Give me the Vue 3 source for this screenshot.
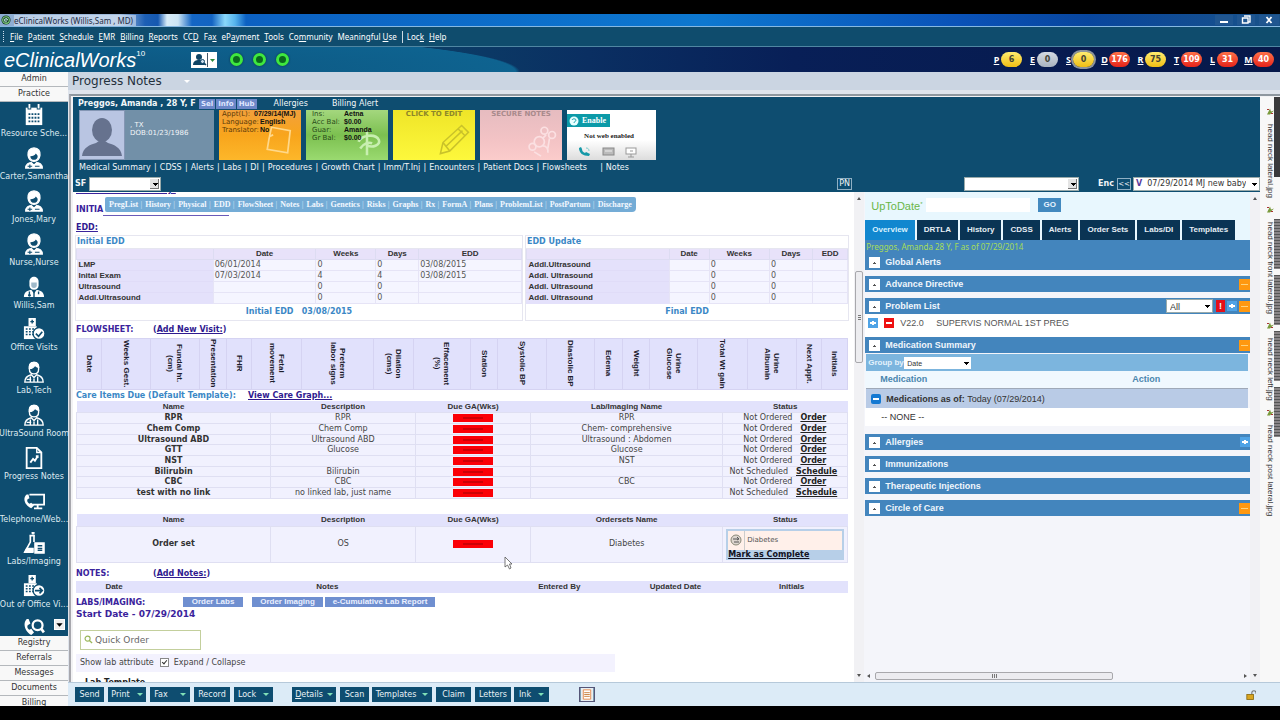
<script setup>
const menus = [
  ['', 'F', 'ile'], ['', 'P', 'atient'], ['', 'S', 'chedule'], ['', 'E', 'MR'], ['', 'B', 'illing'],
  ['', 'R', 'eports'], ['CC', 'D', ''], ['Fa', 'x', ''], ['eP', 'a', 'yment'], ['', 'T', 'ools'],
  ['Co', 'm', 'munity'], ['Meaningful ', 'U', 'se'], ['Loc', 'k', ''], ['', 'H', 'elp']
]
const counters = [
  { k: 'P', n: 6, c: 'yellow' }, { k: 'E', n: 0, c: 'grey' }, { k: 'S', n: 0, c: 'yellow ring' },
  { k: 'D', n: 176, c: 'red' }, { k: 'R', n: 75, c: 'yellow' }, { k: 'T', n: 109, c: 'red' },
  { k: 'L', n: 31, c: 'red' }, { k: 'M', n: 40, c: 'red' }
]
const nav = [
  ['calendar', 'Resource Sche...'], ['nurse', 'Carter,Samantha'], ['nurse', 'Jones,Mary'],
  ['nurse', 'Nurse,Nurse'], ['doctor', 'Willis,Sam'], ['office', 'Office Visits'], ['tech', 'Lab,Tech'],
  ['tech', 'UltraSound Room'], ['note', 'Progress Notes'], ['phone', 'Telephone/Web...'],
  ['lab', 'Labs/Imaging'], ['out', 'Out of Office Vi...']
]
const bands = ['Registry', 'Referrals', 'Messages', 'Documents', 'Billing']
const patientLinks = ['Medical Summary', 'CDSS', 'Alerts', 'Labs', 'DI', 'Procedures', 'Growth Chart', 'Imm/T.Inj', 'Encounters', 'Patient Docs', 'Flowsheets', 'Notes']
const jumps = ['PregList', 'History', 'Physical', 'EDD', 'FlowSheet', 'Notes', 'Labs', 'Genetics', 'Risks', 'Graphs', 'Rx', 'FormA', 'Plans', 'ProblemList', 'PostPartum', 'Discharge']
const initialEdd = [
  ['LMP', '06/01/2014', '0', '0', '03/08/2015'], ['Inital Exam', '07/03/2014', '4', '4', '03/08/2015'],
  ['Ultrasound', '', '0', '0', ''], ['Addl.Ultrasound', '', '0', '0', '']
]
const eddUpdate = [
  ['Addl.Ultrasound', '', '0', '0', ''], ['Addl. Ultrasound', '', '0', '0', ''],
  ['Addl. Ultrasound', '', '0', '0', ''], ['Addl. Ultrasound', '', '0', '0', '']
]
const flow = [
  ['Date', 25], ['Weeks Gest.', 49], ['Fundal ht.\n(cm)', 49], ['Presentation', 27], ['FHR', 25],
  ['Fetal\nmovement', 50], ['Preterm\nlabor signs', 72], ['Dilation\n(cms)', 40], ['Effacement\n(%)', 57],
  ['Station', 27], ['Systolic BP', 49], ['Diastolic BP', 48], ['Edema', 28], ['Weight', 27],
  ['Urine\nGlucose', 48], ['Total Wt gain', 50], ['Urine\nAlbumin', 49], ['Next Appt.', 25], ['Initials', 26]
]
const flowTotal = flow.reduce((s, f) => s + f[1], 0)
const care = [
  ['RPR', 'RPR', 'RPR', 'Not Ordered', 'Order'],
  ['Chem Comp', 'Chem Comp', 'Chem- comprehensive', 'Not Ordered', 'Order'],
  ['Ultrasound ABD', 'Ultrasound ABD', 'Ultrasound : Abdomen', 'Not Ordered', 'Order'],
  ['GTT', 'Glucose', 'Glucose', 'Not Ordered', 'Order'],
  ['NST', '', 'NST', 'Not Ordered', 'Order'],
  ['Bilirubin', 'Bilirubin', '', 'Not Scheduled', 'Schedule'],
  ['CBC', 'CBC', 'CBC', 'Not Ordered', 'Order'],
  ['test with no link', 'no linked lab, just name', '', 'Not Scheduled', 'Schedule']
]
const tabs = ['Overview', 'DRTLA', 'History', 'CDSS', 'Alerts', 'Order Sets', 'Labs/DI', 'Templates']
const closed = [['Allergies', 'plus'], ['Immunizations', ''], ['Therapeutic Injections', ''], ['Circle of Care', 'more']]
const images = ['head neck lateral.jpg', 'head neck front lateral.jpg', 'head neck left.jpg', 'head neck post lateral.jpg']
</script>

<template>
  <div class="screen">
    <header class="titlebar">
      <svg class="appicon" viewBox="0 0 12 12"><circle cx="6" cy="6" r="5.5" fill="#173a2a" /><circle cx="6" cy="6" r="4" fill="none" stroke="#7fd07a" stroke-width="1.3" /><path d="M4 6h4M8 6a2 2 0 1 0-1 2" stroke="#cfe" fill="none" /></svg>
      <span class="apptitle">eClinicalWorks (Willis,Sam , MD)</span>
      <div class="winbtns">
        <button aria-label="Minimize"><svg viewBox="0 0 12 10"><path d="M2 6h8v2H2z" fill="#fff" /></svg></button>
        <button aria-label="Restore"><svg viewBox="0 0 12 10"><path d="M4 1h6v6H8M2.500 3h5.500v5H2.500z" fill="none" stroke="#fff" stroke-width="1.400" /></svg></button>
        <button aria-label="Close"><svg viewBox="0 0 12 10"><path d="M3.500 2l5 6M8.500 2l-5 6" stroke="#fff" stroke-width="1.800" /></svg></button>
      </div>
    </header>

    <nav class="menubar">
      <span class="grip"></span>
      <a v-for="(m, i) in menus" :key="i" href="#" :class="{ sep: m[0] === 'Loc' }">{{ m[0] }}<u>{{ m[1] }}</u>{{ m[2] }}</a>
    </nav>

    <div class="brand">
      <div class="logo">eClinicalWorks<sup>10</sup></div>
      <button class="finder" aria-label="Find patient">
        <svg viewBox="0 0 26 16"><path d="M0 0h26v16H0z" fill="#fff" /><path d="M16.500 1v14" stroke="#456" /><circle cx="8" cy="5" r="3" fill="#0e4465" /><path d="M2 13c0-4 3-5 6-5s5 1 6 5z" fill="#0e4465" /><circle cx="11.500" cy="9.500" r="2" fill="#cde" stroke="#0e4465" /><path d="M13 11l2 2" stroke="#0e4465" stroke-width="1.500" /><path d="M19 7h5l-2.500 3z" fill="#2b8a3a" /></svg>
      </button>
      <i v-for="n in 3" :key="n" class="lamp"></i>
      <ul class="counters">
        <li v-for="c in counters" :key="c.k"><u>{{ c.k }}</u><b :class="c.c">{{ c.n }}</b></li>
      </ul>
    </div>

    <div class="work">
      <aside class="side">
        <button class="band">Admin</button>
        <button class="band">Practice</button>
        <div class="navlist">
          <a v-for="(n, i) in nav" :key="i" href="#" class="navitem">
            <svg viewBox="0 0 24 24" fill="none" stroke="#fff" stroke-width="1.500">
              <template v-if="n[0] === 'calendar'">
                <path d="M3 4h18v19H3z" fill="#fff" stroke="none" /><path d="M7 1v5M17 1v5" stroke="#0e4d70" stroke-width="4" /><path d="M7 0v5M17 0v5" stroke-width="2" />
                <path d="M6 11h12M6 15h12M6 19h12" stroke="#0e4d70" stroke-width="2" stroke-dasharray="2 1.300" />
              </template>
              <template v-else-if="n[0] === 'nurse'">
                <path d="M12 1c-5 0-7 4-6.500 8 .5 4 3 6.500 6.500 6.500s6-2.500 6.500-6.500C19 5 17 1 12 1z" fill="#fff" />
                <path d="M8 10c3 0 5-1 6-3 1 1 2 2 2 3 0 3-2 4-4 4s-4-1-4-4z" fill="#0e4d70" stroke="none" />
                <path d="M3 23c0-4 3-6 6-6l3 3 3-3c3 0 6 2 6 6z" fill="#fff" /><path d="M5 21h5M7.500 19v4M13 21h5" stroke="#0e4d70" stroke-width="1.200" />
              </template>
              <template v-else-if="n[0] === 'doctor'">
                <path d="M7 6c0-7 10-7 10 0v4c0 3-2 5-5 5s-5-2-5-5z" fill="#fff" stroke="none" /><path d="M9 7h6v3c0 2-1 3-3 3s-3-1-3-3z" fill="#9fb9c9" stroke="none" />
                <path d="M1 23c0-5 3-7 8-8l3 4 3-4c5 1 8 3 8 8z" fill="#fff" stroke="none" /><path d="M12 17v6M7 17v4M17 17v3" stroke="#0e4d70" /><circle cx="7" cy="21" r="1.500" fill="#0e4d70" stroke="none" />
              </template>
              <template v-else-if="n[0] === 'office' || n[0] === 'out'">
                <path d="M6 0h8v9H6z" fill="#fff" stroke="none" /><path d="M10 2v4M8 4h4" stroke="#0e4d70" /><path d="M1 9h14v14H1z" fill="#fff" stroke="none" />
                <path d="M3 12h11M3 15h9M3 18h9" stroke="#0e4d70" stroke-dasharray="2 1.500" /><circle cx="17.500" cy="17" r="6.500" fill="#fff" stroke="#0e4d70" />
                <path v-if="n[0] === 'office'" d="M14 17l3 3 4-5" stroke="#0e4d70" stroke-width="1.800" /><path v-else d="M13 17h8M18 14l3 3-3 3" stroke="#0e4d70" stroke-width="1.800" />
              </template>
              <template v-else-if="n[0] === 'tech'">
                <path d="M7 6c0-6 10-6 10 0v3c0 3-2 5-5 5s-5-2-5-5z" /><path d="M7 8c2 0 5-1 6-4 1 2 2 3 4 3-1-8-10-7-10 1z" fill="#fff" />
                <path d="M2 23c0-5 3-7 7-8l3 3 3-3c4 1 7 3 7 8z" /><path d="M8 17v6M16 17v6M4 20h5M12 19v4" />
              </template>
              <template v-else-if="n[0] === 'note'">
                <path d="M4 1h11l5 5v17H4z" stroke-width="2" /><path d="M15 1v5h5" /><path d="M8 17l3-4 2 2 3-5M14 10h2v2" stroke-width="2" />
              </template>
              <template v-else-if="n[0] === 'phone'">
                <path d="M7 5h16v11H10M16 16v3M12 20h9" stroke-width="2" /><path d="M4 5C-1 9 2 17 9 20l3-3-3-3-2 1c-2-1-3-3-2-5l2-1-1-4z" fill="#fff" stroke="none" />
              </template>
              <template v-else>
                <path d="M7 4h6M8 4v7L2 22h9M12 4v7" stroke-width="1.800" /><path d="M4 18h7v4H2z" fill="#fff" /><circle cx="11" cy="1" r="1" /><path d="M13 12h10v11H13z" fill="#fff" /><path d="M16 15h5M16 18h5M16 20h5" stroke="#0e4d70" />
              </template>
            </svg>
            <span>{{ n[1] }}</span>
          </a>
          <div class="lastnav">
            <svg viewBox="0 0 24 20"><path d="M4 1C-1 6 2 15 9 19l3-3-3-4-2 1c-2-1-3-3-2-5l3-2-2-5z" fill="#fff" /><circle cx="16" cy="8" r="5.500" fill="none" stroke="#fff" stroke-width="2.500" /><path d="M20 12l3 4" stroke="#fff" stroke-width="3" /></svg>
            <button aria-label="More items"><svg viewBox="0 0 10 10"><path d="M1.500 3.500h7L5 7.500z" fill="#000" /></svg></button>
          </div>
        </div>
        <button v-for="b in bands" :key="b" class="band">{{ b }}</button>
      </aside>

      <main class="main">
        <h1 class="pagetitle">Progress Notes<svg viewBox="0 0 8 4"><path d="M0 0h8L4 4z" fill="#fff" /></svg></h1>
        <div class="frame">
          <div class="content">
            <section class="patient">
              <div class="prow">
                <b class="pname">Preggos, Amanda , 28 Y, F</b>
                <button>Sel</button><button>Info</button><button>Hub</button>
                <a href="#" class="al">Allergies</a><a href="#" class="ba">Billing Alert</a>
              </div>
              <div class="cards">
                <div class="card id">
                  <svg viewBox="0 0 46 50"><rect width="46" height="50" fill="#8496b4" /><rect x="1" y="1" width="44" height="48" fill="#b9c5e2" /><ellipse cx="23" cy="20" rx="10" ry="12" fill="#66728e" /><path d="M3 46c1-9 8-11 14-13l6-4 6 4c6 2 13 4 14 13z" fill="#66728e" /></svg>
                  <p>, TX<br>DOB:01/23/1986</p>
                </div>
                <div class="card orange">
                  <svg viewBox="0 0 40 40"><path d="M10 5l22 4-3 26-24-4 2-12zM12 14l-5 2" fill="none" stroke="#ffd88a" stroke-width="2" /></svg>
                  <dl><dt>Appt(L):</dt><dd>07/29/14(MJ)</dd><dt>Language:</dt><dd>English</dd><dt>Translator:</dt><dd>No</dd></dl>
                </div>
                <div class="card green">
                  <svg viewBox="0 0 40 40"><path d="M10 22c4-8 20-10 24-2 2 6-8 10-14 6M20 10v28M12 30c4-6 10-8 14-6" fill="none" stroke="#c8efb0" stroke-width="3" /></svg>
                  <dl><dt>Ins:</dt><dd>Aetna</dd><dt>Acc Bal:</dt><dd>$0.00</dd><dt>Guar:</dt><dd>Amanda</dd><dt>Gr Bal:</dt><dd>$0.00</dd></dl>
                </div>
                <div class="card yellow">
                  <svg viewBox="0 0 40 40"><path d="M4 36l3-13L29 3l8 8-22 22zM7 23l8 10M25 7l8 8M11 27L30 9" fill="none" stroke="#c9c22a" stroke-width="1.800" /></svg>
                  <strong>CLICK TO EDIT</strong>
                </div>
                <div class="card pink">
                  <svg viewBox="0 0 40 40"><circle cx="24" cy="9" r="4" /><circle cx="33" cy="14" r="4" /><circle cx="18" cy="22" r="6" /><circle cx="10" cy="28" r="4" /><path d="M22 27c4 0 7 3 6 8M12 34l8 5M26 14l-4 4M30 18l-2 12" /></svg>
                  <strong>SECURE NOTES</strong>
                </div>
                <div class="card web">
                  <button><svg viewBox="0 0 10 10"><circle cx="5" cy="5" r="4.500" fill="#e8ffff" /><path d="M3 4c1-2 4-1 4 0S5 6 5 7" stroke="#079aa6" fill="none" /></svg>Enable</button>
                  <p>Not web enabled</p>
                  <svg class="webicons" viewBox="0 0 89 14"><path d="M12 3c0 5 4 8 10 8l1-2-4-2-1 1c-2-1-3-2-3-4l-1-2z" fill="#1599a8" /><path d="M19 3c2 0 3 1 3 3" stroke="#7cc" fill="none" /><rect x="36" y="3" width="11" height="7" fill="#bbb" stroke="#888" /><path d="M38 6h7" stroke="#eee" /><rect x="59" y="3" width="10" height="6" fill="#fff" stroke="#999" /><path d="M63 6h3M61 12h6M64 9v3" stroke="#999" /></svg>
                </div>
              </div>
              <nav class="plinks"><a v-for="p in patientLinks" :key="p" href="#">{{ p }}</a></nav>
              <div class="sfrow">
                <label for="sf">SF</label>
                <span class="pick sf"><select id="sf"><option></option></select><i></i></span>
                <button class="pn">PN</button>
                <span class="pick mid"><select aria-label="Section"><option></option></select><i></i></span>
                <label for="enc">Enc</label>
                <button class="prev">&lt;&lt;</button>
                <span class="pick enc"><b>V</b><select id="enc"><option>07/29/2014 MJ new baby</option></select><i></i></span>
              </div>
            </section>

            <div class="panes">
              <div class="notes">
                <nav class="jump"><a v-for="j in jumps" :key="j" href="#">{{ j }}</a></nav>
                <div class="scroll">
                  <div class="h ob"><a href="#">OB Menstrual History:</a></div>
                  <div class="h init">INITIA<span></span></div>
                  <div class="h eddh"><a href="#">EDD:</a></div>
                  <div class="edds">
                    <table class="edd left">
                      <caption>Initial EDD</caption>
                      <thead><tr><th></th><th>Date</th><th>Weeks</th><th>Days</th><th>EDD</th></tr></thead>
                      <tbody><tr v-for="(r, i) in initialEdd" :key="i"><th>{{ r[0] }}</th><td v-for="j in 4" :key="j">{{ r[j] }}</td></tr></tbody>
                      <tfoot><tr><td colspan="5">Initial EDD&nbsp;&nbsp; 03/08/2015</td></tr></tfoot>
                    </table>
                    <table class="edd right">
                      <caption>EDD Update</caption>
                      <thead><tr><th></th><th>Date</th><th>Weeks</th><th>Days</th><th>EDD</th></tr></thead>
                      <tbody><tr v-for="(r, i) in eddUpdate" :key="i"><th>{{ r[0] }}</th><td v-for="j in 4" :key="j">{{ r[j] }}</td></tr></tbody>
                      <tfoot><tr><td colspan="5">Final EDD</td></tr></tfoot>
                    </table>
                  </div>
                  <div class="h flowh"><span class="w">FLOWSHEET:</span><a href="#">(<u>Add New Visit:</u>)</a></div>
                  <table class="flow">
                    <thead><tr><th v-for="f in flow" :key="f[0]" :style="{ width: (f[1] / flowTotal * 100) + '%' }"><span>{{ f[0] }}</span></th></tr></thead>
                  </table>
                  <div class="h careh"><span class="cw">Care Items Due (Default Template):</span><a href="#"><u>View Care Graph...</u></a></div>
                  <table class="care">
                    <thead><tr><th>Name</th><th>Description</th><th>Due GA(Wks)</th><th>Lab/Imaging Name</th><th>Status</th></tr></thead>
                    <tbody>
                      <tr v-for="(r, i) in care" :key="i"><td class="nm">{{ r[0] }}</td><td>{{ r[1] }}</td><td><i class="due"></i></td><td>{{ r[2] }}</td>
                        <td :class="['st', { wide: r[4] === 'Schedule' }]">{{ r[3] }}<a href="#">{{ r[4] }}</a></td></tr>
                    </tbody>
                  </table>
                  <table class="care sets">
                    <thead><tr><th>Name</th><th>Description</th><th>Due GA(Wks)</th><th>Ordersets Name</th><th>Status</th></tr></thead>
                    <tbody><tr><td class="nm">Order set</td><td>OS</td><td><i class="due"></i></td><td>Diabetes</td>
                      <td><div class="oset"><div><svg viewBox="0 0 12 12"><circle cx="6" cy="6" r="5" fill="#ddd6d0" stroke="#887" /><path d="M3 5h5M4 8h5M7 3l2 2-2 1" stroke="#555" fill="none" /></svg><span>Diabetes</span></div><a href="#">Mark as Complete</a></div></td></tr></tbody>
                  </table>
                  <div class="h notesh"><span class="w">NOTES:</span><a href="#">(<u>Add Notes:</u>)</a></div>
                  <table class="care nt"><thead><tr><th>Date</th><th>Notes</th><th>Entered By</th><th>Updated Date</th><th>Initials</th></tr></thead></table>
                  <div class="h labs"><span>LABS/IMAGING:</span><button class="b1">Order Labs</button><button class="b2">Order Imaging</button><button class="b3">e-Cumulative Lab Report</button></div>
                  <div class="h start">Start Date - 07/29/2014</div>
                  <div class="quick"><svg viewBox="0 0 10 10"><circle cx="4" cy="4" r="2.800" fill="none" stroke="#9ab65a" stroke-width="1.300" /><path d="M6 6l3 3" stroke="#9ab65a" stroke-width="1.500" /></svg><input type="text" placeholder="Quick Order" aria-label="Quick Order"></div>
                  <div class="attr"><span>Show lab attribute</span><input id="exp" type="checkbox" checked><label for="exp">Expand / Collapse</label></div>
                  <div class="tmpl"><span>Lab Template</span></div>
                </div>
              </div>
              <div class="vbar"><i class="up"></i><b></b><i class="down"></i></div>

              <div class="hub">
                <div class="hubin">
                  <div class="utd"><span>UpToDate<sup>*</sup></span><input type="text" aria-label="UpToDate search"><button>GO</button></div>
                  <div class="tabs"><button v-for="(t, i) in tabs" :key="t" :class="{ on: i === 0 }">{{ t }}</button></div>
                  <div class="who">Preggos, Amanda 28 Y, F as of 07/29/2014</div>
                  <div class="bar first"><i class="tog"></i>Global Alerts</div>
                  <div class="bar"><i class="tog"></i>Advance Directive<i class="more"></i></div>
                  <div class="bar prob"><i class="tog"></i>Problem List
                    <span class="pick all"><select aria-label="Filter problems"><option>All</option></select><i></i></span><i class="alert">!</i><i class="plus back"></i><i class="more"></i></div>
                  <div class="prow2"><i class="plus dot"></i><i class="minus"></i><span class="code">V22.0</span><span>SUPERVIS NORMAL 1ST PREG</span></div>
                  <div class="bar med"><i class="tog"></i>Medication Summary<i class="more"></i></div>
                  <div class="group"><label for="grp">Group by</label><span class="pick date"><select id="grp"><option>Date</option></select><i></i></span></div>
                  <div class="mh"><span>Medication</span><span>Action</span></div>
                  <div class="asof"><i class="minus blue"></i><b>Medications as of:</b>&nbsp;Today (07/29/2014)</div>
                  <div class="none">-- NONE --</div>
                  <div v-for="c in closed" :key="c[0]" class="bar tail"><i class="tog"></i>{{ c[0] }}<i v-if="c[1]" :class="c[1]"></i></div>
                </div>
                <div class="hbar"><i class="lf"></i><b></b><i class="rt"></i></div>
              </div>
              <div class="vbar plain"><i class="up"></i><i class="down"></i></div>
            </div>
          </div>
          <aside class="strip">
            <div class="names">
              <template v-for="m in images" :key="m">
                <svg viewBox="0 0 8 8"><path d="M1 7L4 1l1 3 3-1-4 4z" fill="#7a9a3c" /><path d="M1 2h2M5 6h2" stroke="#a33" /></svg><span>{{ m }}</span>
              </template>
            </div>
            <div class="scans"><i></i><i></i><i></i><i></i><i></i></div>
          </aside>
        </div>
        <footer class="tools">
          <button class="t1">Send</button><button class="t2">Print<i></i></button><button class="t3">Fax<i></i></button><button class="t4">Record</button><button class="t5">Lock<i></i></button>
          <button class="t6"><span><u>D</u>etails</span><i></i></button><button class="t7">Scan</button><button class="t8">Templates<i></i></button><button class="t9">Claim</button><button class="t10">Letters</button><button class="t11">Ink<i></i></button>
          <button class="t12" aria-label="Clipboard"><svg viewBox="0 0 14 14"><rect width="14" height="14" fill="#e9eef2" /><path d="M3 2h8v10H3z" fill="#fff" stroke="#e5884a" /><path d="M4 5h6M4 7h6M4 9h6" stroke="#c9803f" /></svg></button>
          <svg class="lock" viewBox="0 0 12 12"><path d="M7 6V4a2.500 2.500 0 0 1 5 0v1" fill="none" stroke="#777" stroke-width="1.300" /><rect x="1" y="6" width="8" height="6" fill="#d9a520" stroke="#8a6a10" /></svg>
        </footer>
      </main>
    </div>

    <svg class="cursor" viewBox="0 0 9 13"><path d="M1 0v10l2.500-2 2 4 1.500-1-1.500-4H8z" fill="#fff" stroke="#555" stroke-width=".8" /></svg>
  </div>
</template>

<style>
body { margin: 0; background: #000; }
</style>

<style scoped>
* { box-sizing: border-box; }
.screen { position: relative; height: 100vh; min-height: 480px; padding: 14px 0; background: #000; display: flex; flex-direction: column; overflow: hidden; font: 8px/11px "DejaVu Sans", sans-serif; color: #333; }
button { font: inherit; border: 0; padding: 0; margin: 0; background: none; color: inherit; white-space: nowrap; }
a { color: inherit; text-decoration: none; white-space: nowrap; }
i, label { flex: none; }
i { font-style: normal; }
p, dl, dd, ul, h1 { margin: 0; padding: 0; }
svg { display: block; flex: none; }
table { border-collapse: collapse; border-spacing: 0; table-layout: fixed; width: 100%; }
th, td { padding: 0; overflow: hidden; white-space: nowrap; }
th { font: bold 8px/11px "Liberation Sans", Arial, sans-serif; }

.titlebar { flex: none; height: 13px; display: flex; align-items: center; padding-left: 1px; border-bottom: 1px solid #86b9e2; background: linear-gradient(90deg, #8cacd2 0, #a3bddc 120px, #1d5fb4 145px, #1558b0 158px, #d8ecf8 167px, #cbe4f4 178px, #1466c4 192px, #1464c2 212px, #8ad8fa 225px, #56b4ec 235px, #0c61c2 246px, #0d78d0 55%, #0a52b8 75%, #08469e 85%, #1a5288 100%); }
.appicon { width: 10px; height: 10px; margin-right: 3px; }
.apptitle { font: 8px/11px "Noto Sans", sans-serif; color: #1d2c44; background: rgba(220, 232, 245, .55); padding: 0 3px 0 0; }
.winbtns { margin-left: auto; display: flex; gap: 4px; padding-right: 1px; }
.winbtns button { width: 18px; height: 10px; background: #205690; }
.winbtns button:last-child { width: 20px; }
.winbtns svg { width: 12px; height: 10px; margin: auto; }

.menubar { flex: none; height: 20px; display: flex; align-items: center; gap: 5px; padding-left: 3px; background: #0f4c6d; color: #fff; font: 8px/12px "Noto Sans", sans-serif; border-bottom: 1px solid #4f86a2; }
.grip { width: 0; height: 11px; border-left: 1px dotted #cde; margin-right: 1px; }
.sep { border-left: 1px solid #ccdbe4; padding-left: 4px; }
.brand { flex: none; height: 25px; display: flex; align-items: center; padding-left: 4px; color: #fff; background: radial-gradient(ellipse 440px 40px at 80px 100%, #0d5680 0, #0e6390 99%, transparent 100%), linear-gradient(90deg, #0b466a 0, #0c4268 30%, #0a2f62 46%, #081f57 62%, #06184a 100%); }
.logo { width: 187px; font: italic 20px/24px "Liberation Sans", Arial, sans-serif; white-space: nowrap; }
.logo sup { font: 8px/0 "Liberation Sans", Arial, sans-serif; vertical-align: 11px; }
.finder svg { width: 26px; height: 16px; }
.lamp { width: 13px; height: 13px; border-radius: 50%; border: 3px solid #3fe83f; background: #0a6a1c; margin-left: 10px; box-shadow: 0 0 2px #0a2a3a; }
.finder + .lamp { margin-left: 13px; }
.counters { margin-left: auto; list-style: none; display: grid; grid-template-columns: repeat(8, 36px); }
.counters li { display: flex; align-items: center; font: bold 9px/14px "Noto Sans", sans-serif; }
.counters u { width: 9px; text-align: center; }
.counters b { width: 21px; height: 15px; border-radius: 8px; text-align: center; font: bold 8px/15px "DejaVu Sans", sans-serif; color: #443; }
.counters .yellow { background: linear-gradient(#ffec70, #f0be14); }
.counters .grey { background: linear-gradient(#d4dae2, #a9b3bf); }
.counters .red { background: linear-gradient(#ff7148, #e6231a); color: #fff; }
.counters .ring { box-shadow: 0 0 0 2px #8d949c; }

.work { flex: 1; min-height: 0; display: flex; }
.side { flex: none; width: 68px; display: flex; flex-direction: column; overflow: hidden; background: #f7f7f7; }
.band { flex: none; height: 15px; line-height: 14px; text-align: center; color: #333; background: #f8f8f8; border-bottom: 1px solid #b4b8bc; width: 100%; }
.band:last-child { margin-bottom: -5px; }
.navlist { flex: 1; min-height: 0; overflow: hidden; background: #0e4d70; padding-top: 1px; }
.navitem { height: 43px; display: flex; flex-direction: column; align-items: center; justify-content: flex-start; gap: 2px; padding-top: 1px; color: #dfeaf0; line-height: 12px; }
.navitem:nth-child(5n) { height: 42px; }
.navitem svg { width: 22px; height: 22px; }
.lastnav { display: flex; align-items: flex-start; padding: 1px 0 0 23px; gap: 9px; }
.lastnav > svg { width: 22px; height: 18px; }
.lastnav button { width: 11px; height: 11px; background: #eee; border: 1px solid #fff; margin-top: 1px; }
.lastnav button svg { width: 9px; height: 9px; }

.main { flex: 1; min-width: 0; display: flex; flex-direction: column; background: #dfe4ec; }
.pagetitle { flex: none; height: 18px; padding-left: 4px; font: 12px/18px "DejaVu Sans", sans-serif; color: #23303c; background: #cbd5e2; display: flex; align-items: center; }
.pagetitle svg { width: 6px; height: 3px; margin-left: 22px; }
.frame { flex: 1; min-height: 0; display: flex; margin-top: 4px; border-top: 2px solid #8e979f; border-left: 2px solid #a7a7ad; margin-left: 1px; padding: 1px 0 0 2px; background: #f2f2f4; }
.content { flex: 1; min-width: 0; display: flex; flex-direction: column; }
.patient { flex: none; background: #0e4d70; color: #f2f6f8; }
.prow { display: flex; align-items: center; height: 13px; padding-left: 5px; }
.pname { width: 121px; white-space: nowrap; }
.prow button { height: 10px; line-height: 10px; padding: 0 2px; margin-right: 1px; background: #6c87c8; font: bold 7px/10px "DejaVu Sans", sans-serif; color: #dfe6ff; }
.al { margin-left: 16px; }
.ba { margin-left: 24px; }
.cards { display: flex; gap: 5px; padding-left: 6px; }
.card { position: relative; width: 82px; height: 50px; overflow: hidden; font-size: 7px; line-height: 8px; }
.card > svg { position: absolute; right: 4px; bottom: 3px; width: 34px; height: 34px; }
.pink > svg { fill: none; stroke: #fbe0e2; stroke-width: 2; }
.id { width: 135px; background: #7290a8; display: flex; }
.card.id > svg { position: static; width: 46px; height: 50px; }
.id p { padding: 11px 0 0 5px; }
.orange { background: linear-gradient(#f2a03c, #f8a51c 50%, #fdb72a); color: #5c3a08; }
.green { background: linear-gradient(#a4d77e, #7cc050 50%, #9ada70); color: #274a18; }
.card dl { position: relative; display: grid; grid-template-columns: 40px 1fr; padding: 0 0 0 3px; font: 7px/8px "DejaVu Sans", sans-serif; }
.green dl { grid-template-columns: 32px 1fr; padding-left: 6px; }
.orange dl { grid-template-columns: 38px 1fr; }
.card dd { font: bold 7px/8px "Liberation Sans", Arial, sans-serif; color: #111; white-space: nowrap; }
.orange dd:first-of-type { margin-left: -6px; }
.card dt { white-space: nowrap; }
.yellow.card { background: linear-gradient(#efe528, #fdf83c); }
.pink { background: linear-gradient(#e6bcc0, #f3c3c5 60%, #fbcccb); }
.card strong { position: relative; display: block; text-align: center; font: bold 7px/9px "DejaVu Sans", sans-serif; color: #8d862a; white-space: nowrap; }
.pink strong { color: #a98a8c; }
.web { width: 89px; background: linear-gradient(#fff 60%, #ddd); font: bold 7px/9px "Liberation Serif", serif; color: #222; text-align: center; }
.web button { display: flex; align-items: center; gap: 3px; width: 43px; height: 13px; margin-top: 4px; padding-left: 2px; background: #0c9aa8; color: #fff; font: bold 8px/13px "Liberation Serif", serif; }
.web button svg { width: 10px; height: 10px; }
.web p { padding: 5px 5px 0 0; }
.card > svg.webicons { right: 0; bottom: 1px; width: 89px; height: 14px; }
.plinks { display: flex; justify-content: space-between; width: 556px; padding-left: 6px; height: 16px; line-height: 16px; font-size: 8px; }
.plinks a + a::before { content: "|"; margin-right: 3px; }
.plinks a:last-child { padding-left: 10px; }
.sfrow { display: flex; align-items: center; height: 16px; padding: 0 0 1px 2px; }
.sfrow label { font: bold 8px/12px "DejaVu Sans", sans-serif; margin-right: 3px; }
.pick { display: flex; align-items: center; background: #fff; height: 14px; border: 1px solid #9aa; color: #333; flex: none; }
.pick select { appearance: none; border: 0; background: none; flex: 1; min-width: 0; font: inherit; color: inherit; padding: 0 3px; height: 100%; margin: 0; }
.pick > i { width: 9px; height: 10px; margin-right: 1px; background: linear-gradient(#000, #000) 3px 4px / 5px 1px no-repeat, linear-gradient(#000, #000) 4px 5px / 3px 1px no-repeat, linear-gradient(#000, #000) 5px 6px / 1px 1px no-repeat; }
.pick.sf { width: 72px; }
.sf > i, .mid > i { background-color: #e4e4e4; border-right: 1px solid #777; border-bottom: 1px solid #777; }
.pick.mid { width: 115px; margin: 0 19px 0 112px; }
.pn { margin-left: auto; width: 15px; height: 12px; border: 1px solid #8fb0c4; line-height: 10px; }
.prev { width: 14px; height: 12px; border: 1px solid #8fb0c4; font-size: 7px; line-height: 10px; margin-right: 2px; }
.pick.enc { width: 127px; font-size: 8px; }
.enc b { color: #5b3b9c; font-size: 8px; padding: 0 2px; }

.panes { flex: 1; min-height: 0; display: flex; background: #f4f5fa; }
.notes { flex: 1; min-width: 0; position: relative; overflow: hidden; background: #fff; }
.jump { position: absolute; z-index: 2; left: 32px; top: 5px; width: 531px; height: 15px; display: flex; justify-content: space-between; padding: 0 4px; border-radius: 2px 2px 4px 2px; background: #74acd6; color: #f2f8ff; font: bold 8px/15px "Liberation Serif", serif; }
.jump a + a::before { content: "|"; margin-right: 3px; color: #b9d9f0; }
.scroll { padding: 0 6px 0 3px; }
.h { display: flex; align-items: center; font-weight: bold; color: #3a239c; white-space: nowrap; }
.h a { color: #2f1a8f; }
.ob { height: 11px; margin-top: -8px; text-decoration: underline; }
.init { height: 15px; margin-top: 7px; }
.init span { width: 126px; height: 12px; border-bottom: 1px solid #6a5ab8; }
.eddh { height: 18px; margin-top: 1px; text-decoration: underline; }
.edds { display: flex; gap: 4px; }
.edds .left { flex: 446 1 0; }
.edds .right { flex: 322 1 0; }
.edd { width: auto; outline: 1px solid #e6e6f0; }
.edd caption { text-align: left; font-weight: bold; color: #3b88c6; line-height: 12px; padding-left: 1px; outline: 1px solid #e6e6f0; }
.edd thead th { background: #e8e2fa; height: 11px; line-height: 11px; border: 1px solid #dddcf2; border-top: 0; color: #333; }
.edd tbody th { text-align: left; background: #e4e1fb; padding-left: 2px; color: #333; line-height: 10px; border-top: 1px solid #e0dcf8; }
.edd tbody td { background: #f5f5ff; border: 1px solid #e6e4f6; color: #555; padding-left: 1px; line-height: 10px; height: 11px; }
.edd thead th:nth-child(1) { width: 137px; }
.edd thead th:nth-child(2) { width: 103px; }
.edd thead th:nth-child(3) { width: 60px; }
.edd thead th:nth-child(4) { width: 43px; }
.edd thead th:nth-child(5) { width: 103px; }
.right thead th:nth-child(1) { width: 142px; }
.right thead th:nth-child(2) { width: 40px; }
.right thead th:nth-child(5) { width: 35px; }
.edd tfoot td { text-align: center; font-weight: bold; color: #3b88c6; height: 16px; }
.flowh { height: 16px; margin-top: 2px; }
.w { width: 77px; }
.flow thead th { height: 51px; background: #e1e1fc; border: 1px solid #d5d3f2; text-align: center; vertical-align: middle; }
.flow span { writing-mode: vertical-rl; white-space: pre; display: inline-block; font: bold 8px/9px "Liberation Sans", Arial, sans-serif; color: #1c1c2c; text-align: center; vertical-align: middle; }
.careh { height: 11px; color: #3b88c6; }
.cw { width: 172px; }
.care th { background: #e2e2fc; height: 12px; line-height: 11px; color: #333; }
.care th:nth-child(1) { width: 194px; }
.care th:nth-child(2) { width: 145px; }
.care th:nth-child(3) { width: 115px; }
.care th:nth-child(4) { width: 192px; }
.care th:nth-child(5) { width: 125px; }
.care td { height: 11px; line-height: 10px; text-align: center; background: #f1f1fe; border: 1px solid #dfdff2; color: #444; }
.care tbody tr:nth-child(3n) td { height: 10px; line-height: 9px; }
.care .nm { font-weight: bold; color: #333; }
.due { display: block; width: 40px; height: 8px; background: linear-gradient(90deg, transparent 25%, rgba(120, 0, 0, .35) 25%, rgba(120, 0, 0, .35) 75%, transparent 75%) 0 3px / 100% 2px no-repeat #fb0007; margin: 0 auto; }
.st a { font-weight: bold; text-decoration: underline; margin-left: 8px; color: #222; }
.care .st { text-align: right; padding-right: 21px; }
.care .st.wide { padding-right: 10px; }
.care.sets { margin-top: 15px; }
.care.sets tbody td { height: 36px; }
.oset { margin: 0 3px; background: #b7cfe8; height: 31px; text-align: left; padding: 2px; }
.oset div { display: flex; align-items: center; background: #fff0ea; height: 19px; color: #555; }
.oset svg { width: 12px; height: 12px; margin: 0 2px; }
.oset span { border-left: 1px solid #ccc; line-height: 19px; padding-left: 2px; font-size: 7px; }
.oset a { font-weight: bold; text-decoration: underline; color: #112; line-height: 10px; display: block; }
.notesh { height: 14px; margin-top: 4px; }
.nt th:nth-child(1) { width: 76px; }
.nt th:nth-child(2) { width: 350px; }
.nt th:nth-child(3) { width: 113px; }
.nt th:nth-child(4) { width: 119px; }
.nt th:nth-child(5) { width: 113px; }
.labs { height: 15px; margin-top: 2px; }
.labs > span { width: 107px; }
.labs button { height: 10px; background: #6f8fd0; color: #eaf0ff; font: bold 8px/10px "Liberation Sans", Arial, sans-serif; }
.b1 { width: 60px; margin-right: 9px; }
.b2 { width: 71px; margin-right: 2px; }
.b3 { width: 110px; }
.start { font-size: 9px; height: 10px; }
.quick { display: flex; align-items: center; width: 121px; height: 20px; margin: 10px 0 0 4px; border: 1px solid #c3cf9c; padding-left: 3px; }
.quick svg { width: 9px; height: 9px; }
.quick input { border: 0; outline: 0; min-width: 0; flex: 1; padding: 0 0 0 2px; font: 9px/14px "DejaVu Sans", sans-serif; background: none; }
.quick input::placeholder { color: #666; opacity: 1; }
.attr { display: flex; align-items: center; width: 539px; height: 18px; margin-top: 4px; padding-left: 4px; background: #f3f2fe; color: #444; }
.attr input { appearance: none; width: 9px; height: 9px; border: 1px solid #888; margin: 0 5px 0 6px; background: #fff; position: relative; }
.attr input:checked::after { content: ""; position: absolute; left: 2px; top: 0; width: 2px; height: 4px; border: solid #333; border-width: 0 1px 1px 0; transform: rotate(40deg); }
.tmpl { margin: 5px 0 0; padding-left: 9px; font-weight: bold; color: #222; display: flex; width: 538px; }

.vbar { flex: none; width: 10px; background: #f1f1f4; display: flex; flex-direction: column; align-items: center; padding: 5px 0; }
.vbar b { width: 8px; height: 92px; margin-top: 71px; border: 1px solid #a8a8ac; border-radius: 2px; background: linear-gradient(#777, #777) 2px 43px / 3px 1px no-repeat, linear-gradient(#777, #777) 2px 45px / 3px 1px no-repeat, linear-gradient(#777, #777) 2px 47px / 3px 1px no-repeat, #ededf0; }
.up, .down { width: 0; height: 0; border: 2px solid transparent; }
.up { border-bottom: 3px solid #555; border-top: 0; }
.down { border-top: 3px solid #555; border-bottom: 0; margin-top: auto; }
.hub { flex: none; width: 32.5%; display: flex; flex-direction: column; justify-content: space-between; overflow: hidden; font: 9px/14px "Liberation Sans", Arial, sans-serif; }
.hubin { padding: 0 0 0 1px; }
.utd { display: flex; align-items: center; height: 28px; background: #e8f7fe; padding: 0 0 3px 6px; }
.utd span { width: 55px; color: #6ab648; font-size: 11px; }
.utd sup { font-size: 6px; vertical-align: 4px; }
.utd input { width: 104px; height: 14px; border: 0; background: #fff; padding: 0; margin-right: 8px; }
.utd button { width: 23px; height: 14px; background: #4289bf; color: #e8f4ff; font: bold 8px/14px "Liberation Sans", Arial, sans-serif; }
.tabs { display: flex; gap: 2px; height: 20px; background: #e8f7fe; }
.tabs button { background: #0a3454; color: #e6eef4; font: bold 8px/20px "Liberation Sans", Arial, sans-serif; flex: none; padding: 0 7px; }
.tabs .on { background: #1187cf; color: #d9f2ff; }
.who { height: 14px; background: #4385bd; color: #a6dd58; font: 8px/14px "Noto Sans", sans-serif; padding-left: 1px; white-space: nowrap; }
.bar { display: flex; align-items: center; height: 16px; background: #4385bd; color: #f0f6fc; font-weight: bold; margin-bottom: 6px; padding-left: 4px; }
.bar .more, .bar .plus:last-child { margin-left: auto; }
.bar .plus + .more { margin-left: 2px; }
.tog { width: 11px; height: 11px; margin-right: 5px; background: linear-gradient(#555, #555) 4px 6px / 3px 1px no-repeat, linear-gradient(#555, #555) 5px 5px / 1px 1px no-repeat, #fff; }
.more { width: 11px; height: 11px; background: linear-gradient(#ffd27a, #ffd27a) 2px 5px / 7px 1px no-repeat, #ff9810; }
.plus { width: 10px; height: 10px; background: linear-gradient(#fff, #fff) 2px 4px / 6px 2px no-repeat, linear-gradient(#fff, #fff) 4px 3px / 2px 4px no-repeat, #4fa3e6; margin-left: 2px; }
.minus { width: 10px; height: 10px; background: linear-gradient(#fff, #fff) 2px 4px / 6px 2px no-repeat, #ee1111; }
.minus.blue { background-color: #1479d2; border-radius: 2px; margin-right: 5px; }
.dot { margin-left: 0; }
.alert { width: 9px; height: 12px; background: #e5101a; text-align: center; line-height: 12px; margin-left: 3px; }
.all { width: 47px; margin-left: auto; font-weight: normal; }
.bar.prob { margin-bottom: 0; }
.prow2 { display: flex; align-items: center; gap: 6px; height: 23px; padding: 0 0 5px 3px; background: #fff; color: #555; }
.code { width: 30px; }
.bar.med { margin-bottom: 1px; }
.group { display: flex; align-items: center; height: 17px; background: #7cb5de; color: #e4f2fc; margin: 0 2px 0 1px; padding-left: 2px; }
.group label { font: bold 8px/12px "Liberation Sans", Arial, sans-serif; width: 36px; }
.date { width: 67px; height: 12px; border: 0; font-size: 7px; }
.mh { display: grid; grid-template-columns: 252px 1fr; height: 17px; line-height: 17px; padding-left: 15px; background: #f0f8fe; color: #4a86ae; font-weight: bold; }
.asof { display: flex; align-items: center; height: 20px; background: #b9cbe6; border-top: 1px solid #9fa9b8; margin: 0 2px 0 1px; padding-left: 5px; color: #333; }
.none { height: 18px; background: #fff; padding-left: 16px; line-height: 18px; margin-bottom: 8px; }
.hbar { display: flex; align-items: center; height: 13px; padding: 0 3px; }
.hbar b { width: 238px; height: 8px; margin: 0 auto 0 5px; border: 1px solid #a8a8ac; border-radius: 2px; background: linear-gradient(#777, #777) 116px 1px / 1px 4px no-repeat, linear-gradient(#777, #777) 118px 1px / 1px 4px no-repeat, linear-gradient(#777, #777) 120px 1px / 1px 4px no-repeat, #ececf0; }
.lf, .rt { width: 0; height: 0; border: 2px solid transparent; }
.lf { border-right: 3px solid #555; border-left: 0; }
.rt { border-left: 3px solid #555; border-right: 0; }

.strip { flex: none; width: 20px; display: flex; background: #f8f8f8; overflow: hidden; }
.names { width: 14px; padding: 10px 0 0 6px; display: flex; flex-direction: column; align-items: center; }
.names svg { width: 8px; height: 9px; margin-bottom: 8px; }
.names span { writing-mode: vertical-rl; font: 8px/9px "Liberation Sans", Arial, sans-serif; white-space: nowrap; margin-bottom: 7px; }
.scans { flex: 1; display: flex; flex-direction: column; gap: 6px; }
.scans i { height: 50px; background: repeating-linear-gradient(#555 0 1px, #8a8688 1px 3px); }
.scans i:first-child { height: 80px; margin-bottom: 36px; background: #3a3a3c; }

.tools { flex: none; height: 24px; display: flex; align-items: center; padding: 0 24px 0 7px; background: #dcebf7; border-top: 1px solid #b6c9da; }
.tools button { height: 15px; background: #0e4d70; color: #eaf2f6; line-height: 15px; display: flex; align-items: center; justify-content: center; gap: 7px; margin-right: 4px; flex: none; }
.tools button i { border: 3px solid transparent; border-top: 3px solid #7fe0b8; border-bottom: 0; }
.tools .t1 { width: 29px; }
.tools .t2 { width: 38px; }
.tools .t3 { width: 40px; gap: 12px; }
.tools .t4 { width: 36px; }
.tools .t5 { width: 39px; margin-right: 19px; }
.tools .t6 { width: 44px; gap: 4px; }
.tools .t7 { width: 29px; margin-right: 3px; }
.tools .t8 { width: 60px; gap: 6px; }
.tools .t9 { width: 35px; }
.tools .t10 { width: 36px; margin-right: 3px; }
.tools .t11 { width: 35px; margin-right: 30px; }
.tools .t12 { width: 16px; border: 1px solid #557; }
.t12 svg { width: 14px; height: 13px; }
.lock { width: 10px; height: 11px; margin-left: auto; }
.cursor { position: absolute; left: 504px; top: 557px; width: 9px; height: 13px; }
</style>
